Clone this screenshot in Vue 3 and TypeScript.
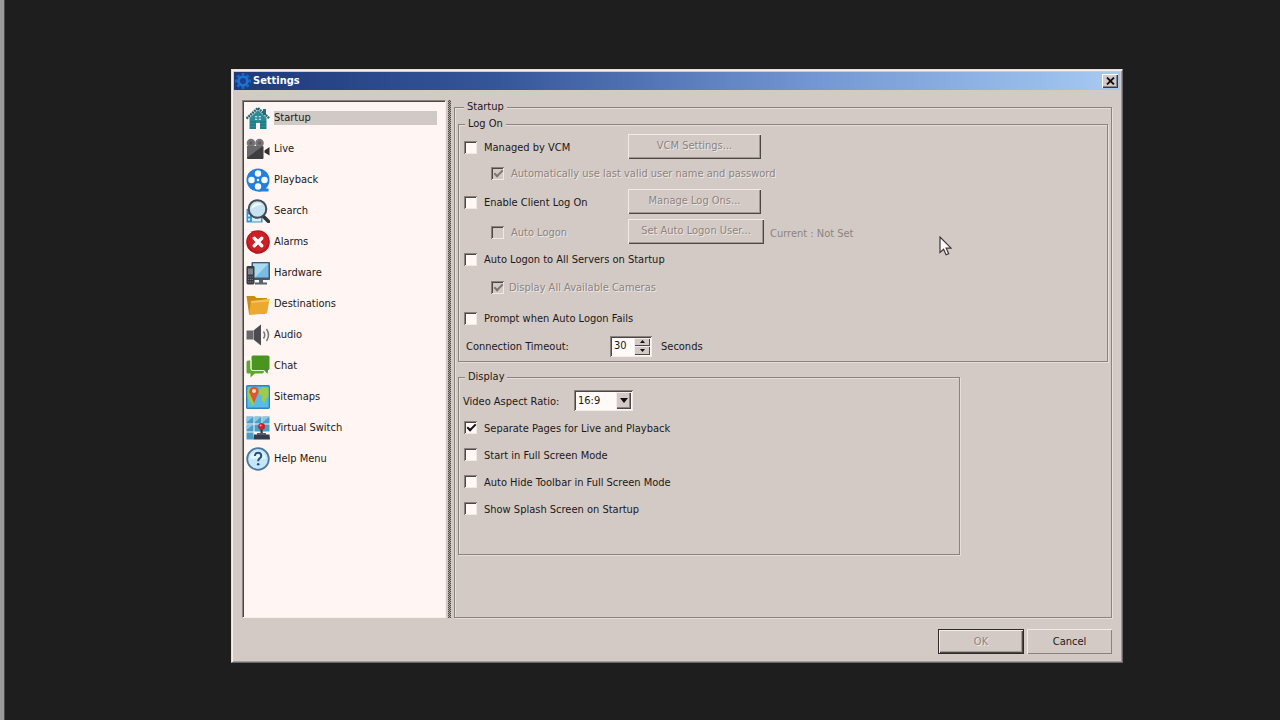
<script setup lang="ts">
import { ref } from 'vue'

type IconName =
  | 'home' | 'live' | 'playback' | 'search' | 'alarms' | 'hardware'
  | 'folder' | 'audio' | 'chat' | 'map' | 'switch' | 'help'

interface Section { label: string; icon: IconName }

const sections: Section[] = [
  { label: 'Startup', icon: 'home' },
  { label: 'Live', icon: 'live' },
  { label: 'Playback', icon: 'playback' },
  { label: 'Search', icon: 'search' },
  { label: 'Alarms', icon: 'alarms' },
  { label: 'Hardware', icon: 'hardware' },
  { label: 'Destinations', icon: 'folder' },
  { label: 'Audio', icon: 'audio' },
  { label: 'Chat', icon: 'chat' },
  { label: 'Sitemaps', icon: 'map' },
  { label: 'Virtual Switch', icon: 'switch' },
  { label: 'Help Menu', icon: 'help' },
]

const current = ref<string>('Startup')
const timeout = ref<number>(30)
const ratio = ref<string>('16:9')
const managed = ref(false)
const lastUser = ref(true)
const clientLogOn = ref(false)
const autoLogon = ref(false)
const allServers = ref(false)
const allCameras = ref(true)
const promptFail = ref(false)

const display = ref([
  { id: 'pages', label: 'Separate Pages for Live and Playback', on: true },
  { id: 'full', label: 'Start in Full Screen Mode', on: false },
  { id: 'hide', label: 'Auto Hide Toolbar in Full Screen Mode', on: false },
  { id: 'splash', label: 'Show Splash Screen on Startup', on: false },
])
</script>

<template>
  <main class="desktop">
    <section class="dialog" role="dialog" aria-labelledby="dialog-title">
      <header class="titlebar">
        <svg class="gear" viewBox="0 0 16 16" aria-hidden="true">
          <g stroke="#1767c0" stroke-width="3">
            <path d="M8 0v16M0 8h16M2.4 2.4l11.2 11.2M13.6 2.4L2.4 13.6" />
          </g>
          <circle cx="8" cy="8" r="5.6" fill="#1b74d0" />
          <circle cx="8" cy="8" r="3" fill="#203f86" />
        </svg>
        <h1 id="dialog-title">Settings</h1>
        <button class="close" type="button" aria-label="Close">
          <svg viewBox="0 0 9 8" aria-hidden="true"><path d="M1 .5l7 7M8 .5l-7 7" stroke="#111" stroke-width="1.8" /></svg>
        </button>
      </header>

      <div class="body">
        <nav class="list" aria-label="Sections">
          <button
            v-for="s in sections"
            :key="s.label"
            type="button"
            class="item"
            :class="{ selected: s.label === current }"
            @click="current = s.label"
          >
            <svg class="icon" viewBox="0 0 24 24" aria-hidden="true">
              <g v-if="s.icon === 'home'">
                <path d="M17 3h3v6h-3z" fill="#2a6f7a" />
                <path d="M3.500 12L12 4l8.500 8v11H14v-6h-4v6H3.500z" fill="#2b8c96" />
                <path d="M.5 12.500L12 2l11.500 10.500" fill="none" stroke="#1f6675" stroke-width="2.400" stroke-dasharray="2 .6" />
                <path d="M9 10h6v4H9z" fill="#a9dce0" />
                <path d="M12 10v4M9 12h6" stroke="#1f6675" />
                <path d="M4 16h6M14 16h6M4 19h6M14 19h6M4 22h6M14 22h6" stroke="#1f6675" stroke-width=".8" />
              </g>
              <g v-else-if="s.icon === 'live'">
                <circle cx="5" cy="6" r="4.300" fill="#77757a" /><circle cx="13.500" cy="6" r="4.300" fill="#77757a" />
                <circle cx="5" cy="6" r="1.700" fill="#5e5d60" /><circle cx="13.500" cy="6" r="1.700" fill="#5e5d60" />
                <rect x="1" y="9" width="16.500" height="13" rx="1" fill="#3e3d40" />
                <path d="M1 10q0-1 1-1h15L2 20H1z" fill="#69686b" />
                <path d="M18.500 13.500l5-3.500v8.500l-5-3z" fill="#2f2e31" />
              </g>
              <g v-else-if="s.icon === 'playback'">
                <circle cx="12" cy="12" r="11.500" fill="#2480da" />
                <path d="M13 20.500h9.500v3H12z" fill="#2480da" />
                <g fill="#f4fbff">
                  <circle cx="12" cy="5.500" r="3.200" /><circle cx="12" cy="18.500" r="3.200" />
                  <circle cx="5.500" cy="12" r="3.200" /><circle cx="18.500" cy="12" r="3.200" />
                  <circle cx="12" cy="12" r="1.200" />
                </g>
              </g>
              <g v-else-if="s.icon === 'search'">
                <path d="M.5 10h16v13.500H.5z" fill="#3b93d2" />
                <path d="M2 11.500h2v2H2zM2 15.500h2v2H2zM2 19.500h2v2H2zM6 15h9v7.500H6z" fill="#d5efff" />
                <path d="M17.500 17.500l5 5" stroke="#34373c" stroke-width="3.600" stroke-linecap="round" />
                <circle cx="11.500" cy="10" r="8.800" fill="#c7e2f2" stroke="#444c55" stroke-width="2" />
                <path d="M5.500 10a6 6 0 0 1 6-6c3 0 4 1 5 2-4 0-7 1-11 4z" fill="#f3fbff" />
              </g>
              <g v-else-if="s.icon === 'alarms'">
                <circle cx="12" cy="12" r="11.800" fill="#b3151b" />
                <circle cx="12" cy="11.500" r="10.300" fill="#cc2026" />
                <path d="M8.300 8.300l7.400 7.400M15.700 8.300l-7.400 7.400" stroke="#fff" stroke-width="3.400" stroke-linecap="round" />
              </g>
              <g v-else-if="s.icon === 'hardware'">
                <rect x="5.500" y="1" width="18.500" height="18" rx="1" fill="#42586b" />
                <path d="M7 2.500h15.500v14H7z" fill="#79bde3" /><path d="M7 2.500h15.500L9 16.500H7z" fill="#a8daf1" />
                <path d="M13 19h4v2.500h4v2H9v-2h4z" fill="#59636c" />
                <rect x=".5" y="5" width="8" height="18.500" rx="1.400" fill="#393b41" />
                <path d="M2 7.500h5v6H2z" fill="#7d8790" />
                <path d="M2 16h5M2 18.500h5M2 21h5" stroke="#777c83" stroke-dasharray="1.200 .7" />
              </g>
              <g v-else-if="s.icon === 'folder'">
                <path d="M.5 4h8l2 2H21v4l-2 12H3z" fill="#c98b16" />
                <path d="M5 9l18.500-2-2.500 14.500L3 23z" fill="#eba92e" />
                <path d="M5 9l18.500-2-.4 2.400L4.800 11z" fill="#f5c25a" />
              </g>
              <g v-else-if="s.icon === 'audio'">
                <path d="M.5 7.500H7v9H.5z" fill="#68676b" />
                <path d="M7.500 7.500L15 1.500v21l-7.500-6z" fill="#4c4b4f" />
                <path d="M17.500 8.500q2.500 3.500 0 7M20.500 6q4 6 0 12" fill="none" stroke="#77767a" stroke-width="1.500" />
              </g>
              <g v-else-if="s.icon === 'chat'">
                <path d="M7 1.500h15q1.500 0 1.500 1.500v11.500q0 1.500-1.500 1.500l-.5 4-3.500-4H7q-1.500 0-1.500-1.500V3Q5.500 1.500 7 1.500z" fill="#4a951f" />
                <path d="M2 6.500h2.500v7.500q0 3 3 3H18q0 2.500-2 2.500H9l-4.500 4V19.500H2Q.5 19.500 .5 18V8Q.5 6.500 2 6.500z" fill="#5fa82c" />
                <path d="M5 6v8.500q0 2 2 2h11" fill="none" stroke="#e2f5d2" />
              </g>
              <g v-else-if="s.icon === 'map'">
                <rect x=".7" y=".7" width="22.600" height="22.600" rx="1" fill="#58bce9" stroke="#2d83bd" stroke-width="1.400" />
                <path d="M1.500 4l5-2 6 3-1 5-4 2 1 5-2 4-3-5-2-4zM13 5l4-3 5.500 1v9l-3 2-1 4-3-3 1-4-4-2z" fill="#9ccc48" />
                <path d="M8 18L3.800 8.500a4.700 4.700 0 1 1 8.400 0z" fill="#d95a30" />
                <circle cx="8" cy="6" r="2" fill="#ffd9c4" />
              </g>
              <g v-else-if="s.icon === 'switch'">
                <path d="M.5 .5h7v7h-7zM8.500 .5h7v7h-7zM16.500 .5h7v7h-7zM.5 8.500h7v7h-7zM8.500 8.500h7v7h-7zM16.500 8.500h7v7h-7zM.5 16.500h7v7h-7z" fill="#4a9fca" />
                <path d="M1 1h6L1 6zM9 1h6L9 6zM17 1h6L17 6zM1 9h6l-6 4.500z" fill="#86c8e5" />
                <path d="M8 18.500h15.500l.5 5H7.500z" fill="#343c4b" />
                <path d="M15.600 11v8" stroke="#2d3340" stroke-width="2.200" />
                <path d="M11 17h9v2h-9z" fill="#515c6e" />
                <circle cx="15.600" cy="10.500" r="3.400" fill="#c9222c" /><circle cx="14.700" cy="9.500" r="1" fill="#ff9a98" />
              </g>
              <g v-else>
                <circle cx="12" cy="12" r="10.800" fill="#c5e6fa" stroke="#4a789f" stroke-width="1.800" />
                <path d="M4 12a8 8 0 0 1 16 0z" fill="#e2f4fe" />
                <path d="M8.800 9q.2-3.200 3.300-3.200t3.200 2.900q0 1.500-1.700 2.700-1.400 1-1.400 2.800" fill="none" stroke="#225480" stroke-width="2" />
                <circle cx="12.200" cy="17.300" r="1.300" fill="#225480" />
              </g>
            </svg>
            <span class="caption">{{ s.label }}</span>
          </button>
        </nav>

        <div class="splitter" role="separator" aria-orientation="vertical"></div>

        <fieldset class="group page">
          <legend>Startup</legend>

          <fieldset class="group logon">
            <legend>Log On</legend>
            <div class="row">
              <label class="check"><input v-model="managed" type="checkbox" />Managed by VCM</label>
              <button class="btn" type="button" disabled>VCM Settings...</button>
            </div>
            <div class="row">
              <label class="check sub off"><input v-model="lastUser" type="checkbox" disabled />Automatically use last valid user name and password</label>
            </div>
            <div class="row">
              <label class="check"><input v-model="clientLogOn" type="checkbox" />Enable Client Log On</label>
              <button class="btn" type="button" disabled>Manage Log Ons...</button>
            </div>
            <div class="row">
              <label class="check sub off"><input v-model="autoLogon" type="checkbox" disabled />Auto Logon</label>
              <button class="btn wide" type="button" disabled>Set Auto Logon User...</button>
              <span class="status">Current : Not Set</span>
            </div>
            <div class="row">
              <label class="check"><input v-model="allServers" type="checkbox" />Auto Logon to All Servers on Startup</label>
            </div>
            <div class="row">
              <label class="check sub off near"><input v-model="allCameras" type="checkbox" disabled />Display All Available Cameras</label>
            </div>
            <div class="row">
              <label class="check"><input v-model="promptFail" type="checkbox" />Prompt when Auto Logon Fails</label>
            </div>
            <div class="row">
              <label class="timeout" for="timeout">Connection Timeout:</label>
              <span class="spinner">
                <input id="timeout" v-model.number="timeout" type="text" inputmode="numeric" />
                <span class="arrows">
                  <button type="button" aria-label="Increase" @click="timeout++">
                    <svg viewBox="0 0 5 3" aria-hidden="true"><path d="M2.500 0L5 3H0z" fill="#111" /></svg>
                  </button>
                  <button type="button" aria-label="Decrease" @click="timeout--">
                    <svg viewBox="0 0 5 3" aria-hidden="true"><path d="M0 0h5L2.500 3z" fill="#111" /></svg>
                  </button>
                </span>
              </span>
              <span class="unit">Seconds</span>
            </div>
          </fieldset>

          <fieldset class="group display">
            <legend>Display</legend>
            <div class="row">
              <label class="ratio" for="ratio">Video Aspect Ratio:</label>
              <span class="combo">
                <select id="ratio" v-model="ratio">
                  <option>16:9</option>
                  <option>4:3</option>
                </select>
                <span class="drop">
                  <svg viewBox="0 0 8 5" aria-hidden="true"><path d="M0 0h8L4 5z" fill="#111" /></svg>
                </span>
              </span>
            </div>
            <div v-for="d in display" :key="d.id" class="row">
              <label class="check"><input v-model="d.on" type="checkbox" />{{ d.label }}</label>
            </div>
          </fieldset>
        </fieldset>
      </div>

      <footer class="actions">
        <button class="btn default" type="button" disabled>OK</button>
        <button class="btn" type="button">Cancel</button>
      </footer>

      <svg class="pointer" viewBox="0 0 13 20" aria-hidden="true">
        <path d="M1 1v15.500l3.600-3.300 2.500 5.600 2.600-1.100-2.500-5.500h4.900z" fill="#fff8f8" stroke="#3c3638" stroke-width="1.200" />
      </svg>
    </section>
  </main>
</template>

<style>
body {
  margin: 0;
  background: #1e1e1e;
}
</style>

<style scoped>
* {
  box-sizing: border-box;
}

.desktop {
  --face: #d3cac5;
  --light: #f3ebe7;
  --shade: #8a827e;
  --dark: #4c4644;
  min-height: 100vh;
  padding: 69px 157px 57px 227px;
  border-left: 4px solid #9a9a9a;
  box-shadow: inset 1px 0 0 #4a4a4a;
  background: #1e1e1e;
  color: #1c1818;
  font: 11px/14px "DejaVu Sans Condensed", "DejaVu Sans", sans-serif;
  display: flex;
}

button,
input,
select {
  font: inherit;
  color: inherit;
  margin: 0;
  padding: 0;
  border: 0;
  border-radius: 0;
}

.dialog {
  position: relative;
  flex: 1;
  min-width: 0;
  display: flex;
  flex-direction: column;
  padding: 2px;
  background: var(--face);
  border: 1px solid;
  border-color: #e6dedd #68666a #68666a #e6dedd;
  box-shadow: inset 1px 1px 0 #f6efee, inset -1px -1px 0 #a29a9a;
}

.titlebar {
  display: flex;
  align-items: center;
  height: 18px;
  padding: 0 2px 0 1px;
  background: linear-gradient(90deg, #1f3a7c, #36569a 30%, #7296d2 65%, #a6caf2);
  color: #fff;
}

.gear {
  width: 16px;
  height: 16px;
}

h1 {
  flex: 1;
  margin: 0 0 0 2px;
  font-size: 11px;
  line-height: 14px;
  font-weight: 700;
}

.close {
  display: grid;
  place-items: center;
  width: 16px;
  height: 14px;
  background: var(--face);
  box-shadow: inset 1px 1px 0 #fff, inset -1px -1px 0 #3c3a3c, inset -2px -2px 0 var(--shade);
}

.close svg {
  width: 9px;
  height: 8px;
}

.body {
  flex: 1;
  display: flex;
  padding: 10px 8px 0;
}

.list {
  width: 204px;
  padding-top: 1px;
  display: flex;
  flex-direction: column;
  background: #fff5f3;
  border: 1px solid;
  border-color: var(--shade) #f6eeea #f6eeea var(--shade);
  box-shadow: inset 1px 1px 0 var(--dark);
}

.item {
  display: flex;
  align-items: center;
  height: 31px;
  padding: 0 8px 0 3px;
  background: none;
  text-align: left;
}

.icon {
  width: 24px;
  height: 24px;
  margin-right: 4px;
}

.caption {
  flex: 1;
}

.selected .caption {
  background: #d1c9c5;
}

.splitter {
  width: 3px;
  margin: 0 3px 0 2px;
  background: repeating-conic-gradient(#4c4644 0 25%, #b5aca8 0 50%) 0 0 / 2px 2px;
}

.group {
  min-width: 0;
  margin: 0;
  padding: 0;
  border: 1px solid var(--shade);
  box-shadow: inset 1px 1px 0 #e6deda, 1px 1px 0 #e6deda;
}

legend {
  padding: 0 3px;
  margin-left: 6px;
  background: var(--face);
}

.page {
  flex: 1;
  padding: 3px 3px 0;
}

.logon {
  padding: 4px 0 2px;
}

.row {
  display: flex;
  align-items: center;
  height: 27px;
}

.logon .row:nth-of-type(1),
.logon .row:nth-of-type(2),
.logon .row:nth-of-type(5) {
  height: 26px;
}

.logon .row:nth-of-type(3),
.logon .row:nth-of-type(7) {
  height: 32px;
}

.logon .row:nth-of-type(4) {
  height: 28px;
}

.logon .row:nth-of-type(6) {
  height: 30px;
}

.logon .row:nth-of-type(8) {
  height: 24px;
}

.check {
  display: flex;
  align-items: center;
  gap: 7px;
  min-width: 169px;
  padding-left: 5px;
  white-space: nowrap;
}

.check.sub {
  padding-left: 32px;
}

.check.near {
  gap: 5px;
}

.check input {
  appearance: none;
  width: 13px;
  height: 13px;
  margin-bottom: 2px;
  background: #fff8f5;
  box-shadow: inset 1px 1px 0 var(--shade), inset -1px -1px 0 #f0e8e4, inset 2px 2px 0 var(--dark);
}

.check input:disabled {
  background: var(--face);
}

.check input:checked::before {
  content: "";
  display: block;
  width: 7px;
  height: 3px;
  margin: 3px;
  border: solid #111;
  border-width: 0 0 2px 2px;
  transform: rotate(-45deg);
}

.check input:checked:disabled::before {
  border-color: #7d7571;
}

.off,
.btn:disabled {
  color: #8c8480;
  text-shadow: 1px 1px 0 #f0e8e4;
}

.status {
  margin: 2px 0 0 6px;
  color: #8c8480;
}

.btn {
  width: 133px;
  height: 25px;
  background: var(--face);
  box-shadow: inset 1px 1px 0 var(--light), inset -1px -1px 0 var(--dark), inset -2px -2px 0 #a19894;
}

.row .btn {
  margin-bottom: 4px;
}

.btn.wide {
  width: 136px;
}

.timeout {
  width: 151px;
  padding-left: 7px;
}

.spinner,
.combo {
  display: flex;
  height: 21px;
  margin-bottom: 2px;
  padding: 2px;
  background: #fffaf7;
  box-shadow: inset 1px 1px 0 var(--shade), inset -1px -1px 0 var(--light), inset 2px 2px 0 var(--dark);
}

.spinner {
  width: 42px;
}

.spinner input {
  flex: 1;
  min-width: 0;
  padding-left: 2px;
  background: none;
}

.arrows {
  width: 16px;
  display: flex;
  flex-direction: column;
}

.arrows button {
  flex: 1;
  display: grid;
  place-items: center;
  background: var(--face);
  box-shadow: inset 1px 1px 0 var(--light), inset -1px -1px 0 var(--dark);
}

.arrows svg {
  width: 5px;
  height: 3px;
}

.unit {
  margin-left: 9px;
}

.display {
  width: 502px;
  max-width: 100%;
  margin-top: 8px;
  padding: 4px 0 31px;
}

.ratio {
  width: 115px;
  padding-left: 4px;
}

.combo {
  position: relative;
  width: 59px;
}

.combo select {
  appearance: none;
  width: 100%;
  padding-left: 2px;
  background: none;
}

.drop {
  position: absolute;
  top: 2px;
  right: 2px;
  bottom: 2px;
  width: 15px;
  display: grid;
  place-items: center;
  pointer-events: none;
  background: var(--face);
  box-shadow: inset 1px 1px 0 var(--light), inset -1px -1px 0 var(--dark), inset -2px -2px 0 var(--shade);
}

.drop svg {
  width: 8px;
  height: 5px;
}

.actions {
  display: flex;
  justify-content: flex-end;
  gap: 3px;
  padding: 11px 8px 6px;
}

.actions .btn {
  width: 85px;
}

.actions .btn:not(.default) {
  box-shadow: inset 1px 1px 0 var(--light), inset -1px -1px 0 var(--shade);
}

.actions .default {
  width: 86px;
  border: 1px solid #2e2828;
}

.pointer {
  position: absolute;
  left: 707px;
  top: 166px;
  width: 13px;
  height: 20px;
  pointer-events: none;
}
</style>
